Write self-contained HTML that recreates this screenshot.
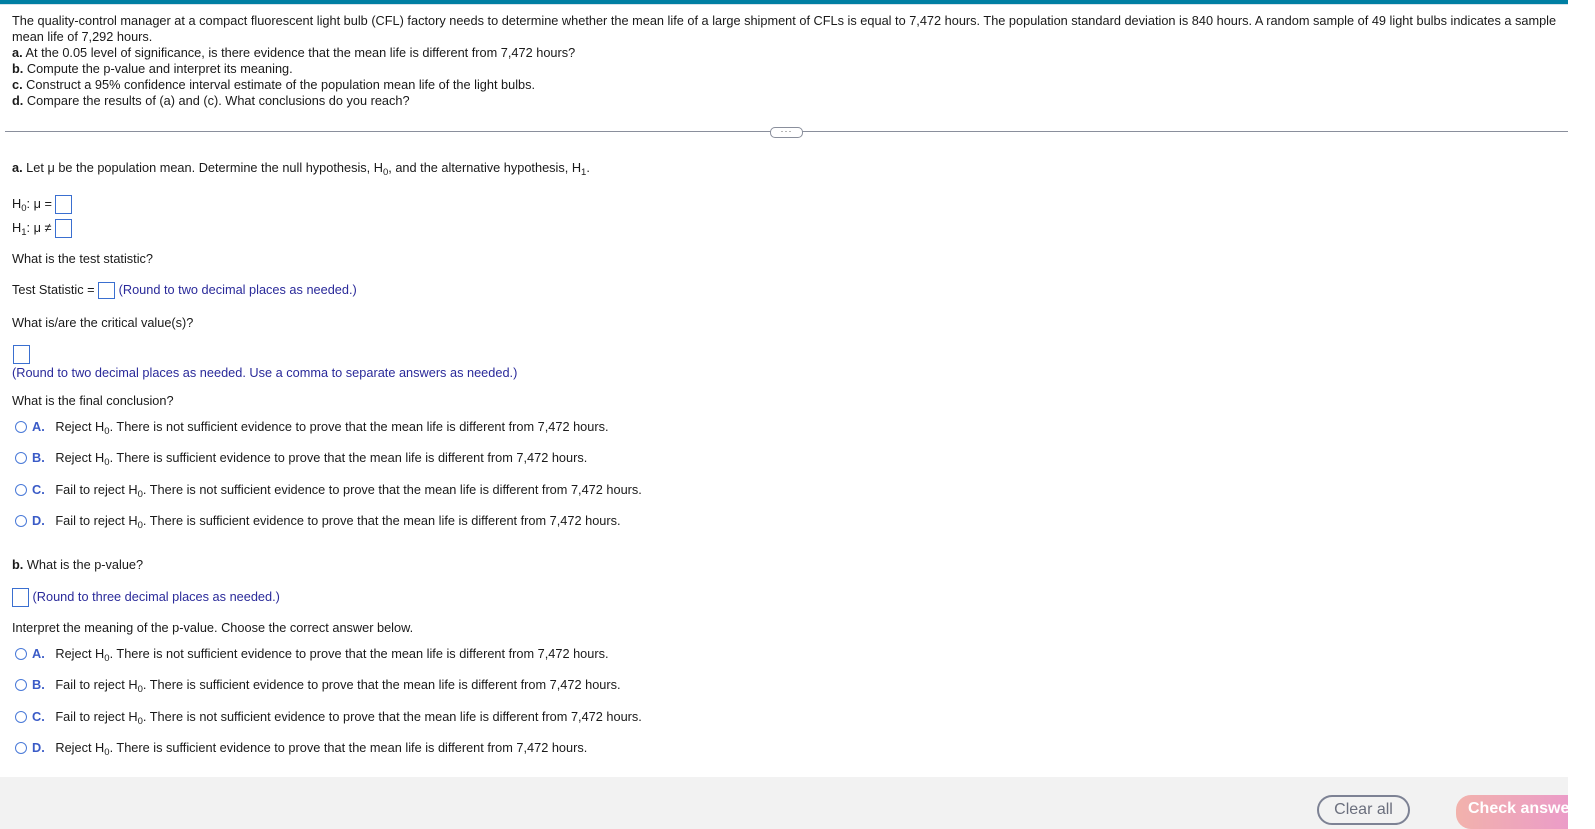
<!DOCTYPE html>
<html><head><meta charset="utf-8"><style>
body{margin:0;width:1595px;height:829px;background:#fff;font-family:"Liberation Sans",Arial,sans-serif;font-size:12.75px;color:#1a1a1a;position:relative;overflow:hidden}
.a{position:absolute;white-space:nowrap;line-height:16px}
.bx{display:inline-block;width:15px;height:17px;border:1px solid #3a6fd0;box-sizing:border-box;vertical-align:middle}
.blue{color:#2a2a9a}
.r{position:absolute;width:12px;height:12px;border:1px solid #4a7ad8;border-radius:50%;box-sizing:border-box}
.l{color:#3a5bc7;font-weight:bold}
sub{font-size:9.5px;vertical-align:-3px;line-height:0}
</style></head><body>
<div style="position:absolute;left:0;top:0;width:1568px;height:4px;background:#007fa3"></div>
<div style="position:absolute;left:0;top:4px;width:1568px;height:1px;background:#d6e2ea"></div>
<div class="a" style="left:12px;top:13px">The quality-control manager at a compact fluorescent light bulb (CFL) factory needs to determine whether the mean life of a large shipment of CFLs is equal to 7,472 hours. The population standard deviation is 840 hours. A random sample of 49 light bulbs indicates a sample</div>
<div class="a" style="left:12px;top:29px">mean life of 7,292 hours.</div>
<div class="a" style="left:12px;top:45px"><b>a.</b> At the 0.05 level of significance, is there evidence that the mean life is different from 7,472 hours?</div>
<div class="a" style="left:12px;top:61px"><b>b.</b> Compute the p-value and interpret its meaning.</div>
<div class="a" style="left:12px;top:77px"><b>c.</b> Construct a 95% confidence interval estimate of the population mean life of the light bulbs.</div>
<div class="a" style="left:12px;top:93px"><b>d.</b> Compare the results of (a) and (c). What conclusions do you reach?</div>
<div style="position:absolute;left:5px;top:131px;width:1563px;height:1px;background:#8a8f9c"></div>
<div style="position:absolute;left:770px;top:127px;width:31px;height:9px;border:1px solid #8a8f9c;border-radius:5px;background:#fff;font-size:9px;line-height:6px;text-align:center;color:#555;letter-spacing:1px">···</div>
<div class="a" style="left:12px;top:160px"><b>a.</b> Let μ be the population mean. Determine the null hypothesis, H<sub>0</sub>, and the alternative hypothesis, H<sub>1</sub>.</div>
<div class="a" style="left:12px;top:195px">H<sub>0</sub>: μ = <span class="bx" style="width:17px;height:19px"></span></div>
<div class="a" style="left:12px;top:219px">H<sub>1</sub>: μ ≠ <span class="bx" style="width:17px;height:19px"></span></div>
<div class="a" style="left:12px;top:251px">What is the test statistic?</div>
<div class="a" style="left:12px;top:282px">Test Statistic = <span class="bx" style="width:17px"></span> <span class="blue">(Round to two decimal places as needed.)</span></div>
<div class="a" style="left:12px;top:315px">What is/are the critical value(s)?</div>
<div style="position:absolute;left:13px;top:345px;width:17px;height:19px;border:1px solid #3a6fd0;box-sizing:border-box"></div>
<div class="a blue" style="left:12px;top:365px">(Round to two decimal places as needed. Use a comma to separate answers as needed.)</div>
<div class="a" style="left:12px;top:393px">What is the final conclusion?</div>
<div class="r" style="left:15px;top:421px"></div><div class="a" style="left:32px;top:419px"><span class="l">A.</span>&nbsp;&nbsp; Reject H<sub>0</sub>. There is not sufficient evidence to prove that the mean life is different from 7,472 hours.</div>
<div class="r" style="left:15px;top:452px"></div><div class="a" style="left:32px;top:450px"><span class="l">B.</span>&nbsp;&nbsp; Reject H<sub>0</sub>. There is sufficient evidence to prove that the mean life is different from 7,472 hours.</div>
<div class="r" style="left:15px;top:484px"></div><div class="a" style="left:32px;top:482px"><span class="l">C.</span>&nbsp;&nbsp; Fail to reject H<sub>0</sub>. There is not sufficient evidence to prove that the mean life is different from 7,472 hours.</div>
<div class="r" style="left:15px;top:515px"></div><div class="a" style="left:32px;top:513px"><span class="l">D.</span>&nbsp;&nbsp; Fail to reject H<sub>0</sub>. There is sufficient evidence to prove that the mean life is different from 7,472 hours.</div>
<div class="a" style="left:12px;top:557px"><b>b.</b> What is the p-value?</div>
<div class="a" style="left:12px;top:588px"><span class="bx" style="width:17px;height:19px"></span> <span class="blue">(Round to three decimal places as needed.)</span></div>
<div class="a" style="left:12px;top:620px">Interpret the meaning of the p-value. Choose the correct answer below.</div>
<div class="r" style="left:15px;top:648px"></div><div class="a" style="left:32px;top:646px"><span class="l">A.</span>&nbsp;&nbsp; Reject H<sub>0</sub>. There is not sufficient evidence to prove that the mean life is different from 7,472 hours.</div>
<div class="r" style="left:15px;top:679px"></div><div class="a" style="left:32px;top:677px"><span class="l">B.</span>&nbsp;&nbsp; Fail to reject H<sub>0</sub>. There is sufficient evidence to prove that the mean life is different from 7,472 hours.</div>
<div class="r" style="left:15px;top:711px"></div><div class="a" style="left:32px;top:709px"><span class="l">C.</span>&nbsp;&nbsp; Fail to reject H<sub>0</sub>. There is not sufficient evidence to prove that the mean life is different from 7,472 hours.</div>
<div class="r" style="left:15px;top:742px"></div><div class="a" style="left:32px;top:740px"><span class="l">D.</span>&nbsp;&nbsp; Reject H<sub>0</sub>. There is sufficient evidence to prove that the mean life is different from 7,472 hours.</div>
<div style="position:absolute;left:0;top:777px;width:1568px;height:52px;background:#f2f2f2"></div>
<div style="position:absolute;left:1317px;top:795px;width:93px;height:30px;border:2px solid #7d8294;border-radius:15px;box-sizing:border-box;color:#6b6f7d;font-size:16px;text-align:center;line-height:26px">Clear all</div>
<div style="position:absolute;left:1456px;top:795px;width:112px;height:34px;border-radius:15px 0 0 15px;background:linear-gradient(90deg,#f2b2ac,#eb9cc8);color:#fff;font-weight:bold;font-size:16px;line-height:28px;padding-left:12px;box-sizing:border-box;overflow:hidden;white-space:nowrap">Check answer</div>
</body></html>
